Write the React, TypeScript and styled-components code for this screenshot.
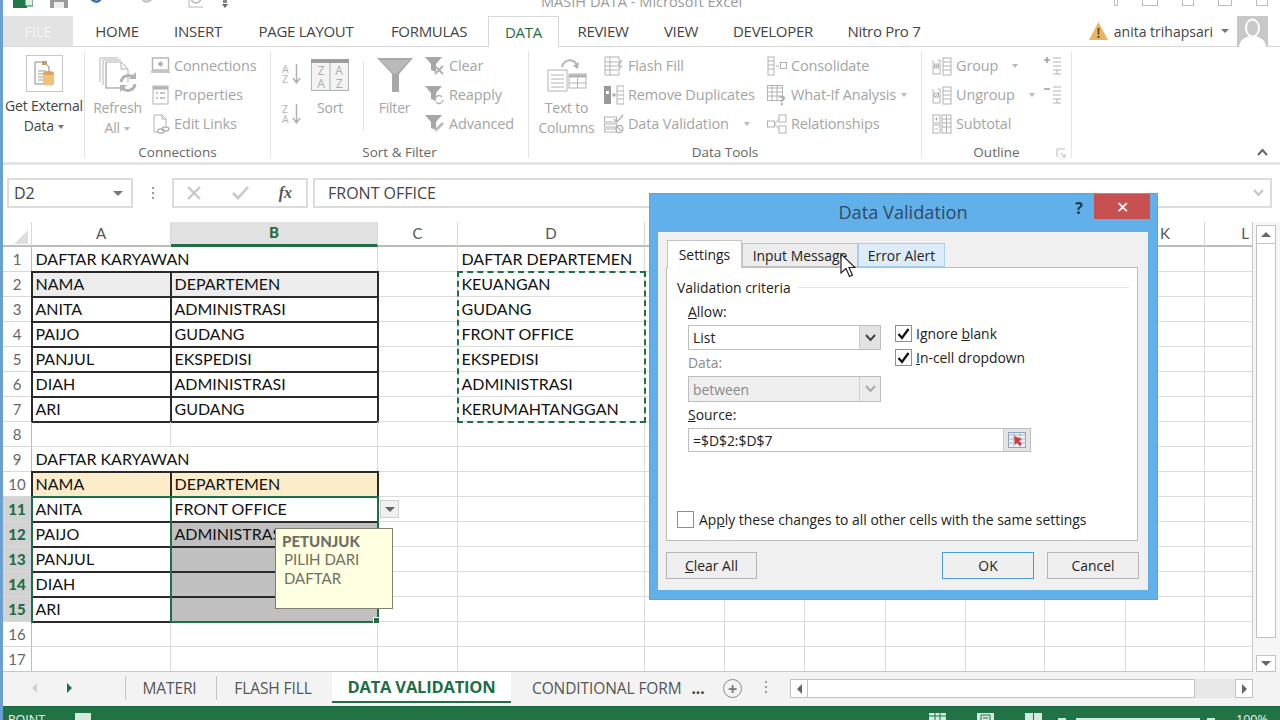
import React from 'react'
import styled, { createGlobalStyle } from 'styled-components'

const UI_FONT = '"Open Sans", "Liberation Sans", sans-serif'
const SHEET_FONT = 'Lato, "Liberation Sans", sans-serif'
const GREEN = '#1f6e46'
const ICON = '#b2b2b2'

const GlobalStyle = createGlobalStyle`
  html, body { margin: 0; padding: 0; background: #fff; }
  #root { width: 1280px; height: 720px; overflow: hidden; }
  * { box-sizing: border-box; }
`

/* ---------- icons ---------- */

const ExternalDataIcon = () => (
  <svg width="22" height="26" viewBox="0 0 22 26">
    <path d="M2 1h9l5 5v17H2z" fill="#fff" stroke="#8a8a8a" />
    <path d="M5 10h8M5 13h8M5 16h6M5 19h6" stroke="#9a9a9a" />
    <rect x="9" y="0" width="5" height="4" fill="#b9a26a" />
    <path d="M10 12h11v11c0 2-11 2-11 0z" fill="#eec27a" />
    <ellipse cx="15.5" cy="12" rx="5.5" ry="2" fill="#d9a659" />
  </svg>
)
const RefreshIcon = () => (
  <svg width="38" height="38" viewBox="0 0 38 38" fill="none" stroke={ICON}>
    <path d="M1 2h18M1 2v24M4 4h18M4 4v25M7 6h15l7 7v13" />
    <path d="M7 6v26h14" strokeWidth="1.5" />
    <path d="M22 6v7h7" />
    <path d="M22 26a7.5 7.5 0 0 1 13-4" strokeWidth="3" />
    <path d="M36 28a7.5 7.5 0 0 1-13 4" strokeWidth="3" />
    <path d="M37 16v7h-7zM21 36v-7h7z" fill={ICON} stroke="none" />
  </svg>
)
const ConnectionsIcon = () => (
  <svg width="19" height="17" viewBox="0 0 19 17" fill="none" stroke={ICON}>
    <rect x="1.5" y="1" width="16" height="12" strokeWidth="1.4" />
    <path d="M0 15h19" strokeWidth="1.5" />
    <path d="M9.5 4l3 3-3 3-3-3z" fill={ICON} stroke="none" />
  </svg>
)
const PropertiesIcon = () => (
  <svg width="17" height="20" viewBox="0 0 17 20" fill="none" stroke={ICON}>
    <rect x="1" y="1" width="15" height="18" />
    <path d="M1 3h15" strokeWidth="3" />
    <path d="M4 8h2M4 13h2M8 8h5M8 13h5" strokeWidth="1.5" />
  </svg>
)
const EditLinksIcon = () => (
  <svg width="19" height="20" viewBox="0 0 19 20" fill="none" stroke={ICON}>
    <path d="M3 16V1h8l4 4v7M11 1v4h4" />
    <path d="M3 16v2h4" />
    <ellipse cx="10" cy="17" rx="3.5" ry="2" strokeWidth="1.3" />
    <ellipse cx="14.5" cy="15" rx="3.5" ry="2" strokeWidth="1.3" />
  </svg>
)
const SortSmallIcon = ({ top, bottom }: { top: string; bottom: string }) => (
  <svg width="20" height="22" viewBox="0 0 20 22">
    <text x="0" y="9.5" fontSize="10.5" fontFamily={UI_FONT} fill={ICON}>{top}</text>
    <text x="0" y="20" fontSize="10.5" fontFamily={UI_FONT} fill={ICON}>{bottom}</text>
    <path d="M14.5 1v18M11 15l3.5 5 3.5-5" fill="none" stroke={ICON} strokeWidth="1.5" />
  </svg>
)
const SortBigIcon = () => (
  <svg width="38" height="32" viewBox="0 0 38 32">
    <rect x="0.5" y="0.5" width="37" height="31" fill="#f3f3f3" stroke={ICON} />
    <rect x="0" y="0" width="38" height="4" fill="#9d9d9d" />
    <path d="M19 4v27" stroke={ICON} />
    <g fontSize="12" fontFamily={UI_FONT} fill="#adadad" textAnchor="middle">
      <text x="10" y="16">Z</text>
      <text x="28" y="16">A</text>
      <text x="10" y="29">A</text>
      <text x="28" y="29">Z</text>
    </g>
  </svg>
)
const FilterIcon = () => (
  <svg width="36" height="36" viewBox="0 0 36 36">
    <path d="M0 1h36L22 17v18h-7V17z" fill="#a8a8a8" />
    <path d="M3 3h30L19 17h-2z" fill="#bababa" />
  </svg>
)
const SmallFunnel = () => <path d="M0 1h17l-6 7v8l-5-2V8z" fill="#a6a6a6" />
const ClearIcon = () => (
  <svg width="20" height="20" viewBox="0 0 20 20">
    <SmallFunnel />
    <path d="M10 10l8 8M18 10l-8 8" stroke={ICON} strokeWidth="2" />
  </svg>
)
const ReapplyIcon = () => (
  <svg width="20" height="20" viewBox="0 0 20 20" fill="none">
    <SmallFunnel />
    <path d="M10 14a4 4 0 0 1 7-2M18 15a4 4 0 0 1-7 2" stroke={ICON} strokeWidth="1.4" />
  </svg>
)
const AdvancedIcon = () => (
  <svg width="20" height="20" viewBox="0 0 20 20">
    <SmallFunnel />
    <path d="M10 18l1-4 6-6 2 2-6 6z" fill="#bcbcbc" />
  </svg>
)
const TextColumnsIcon = () => (
  <svg width="40" height="36" viewBox="0 0 40 36" fill="none" stroke={ICON}>
    <path d="M15 10c2-8 11-9 15-2" strokeWidth="2" />
    <path d="M26 9l5 3 1-7z" fill={ICON} stroke="none" />
    <rect x="1" y="13" width="19" height="21" />
    <path d="M4 18h13M4 22h13M4 26h13M4 30h13" />
    <rect x="22" y="17" width="17" height="14" />
    <path d="M22 19h17" strokeWidth="3" />
    <path d="M30.5 21v10M22 26h17" />
  </svg>
)
const FlashFillIcon = () => (
  <svg width="20" height="20" viewBox="0 0 20 20" fill="none" stroke={ICON}>
    <rect x="1" y="1" width="14" height="18" />
    <path d="M1 6h14M1 10h14M1 14h14M6 1v18" />
    <path d="M15 4h4l-3 5h3l-6 9 2-7h-2z" fill="#bcbcbc" stroke="#fff" strokeWidth="0.5" />
  </svg>
)
const RemoveDupIcon = () => (
  <svg width="20" height="20" viewBox="0 0 20 20">
    <rect x="0" y="1" width="7" height="18" fill="#999" />
    <rect x="2" y="6" width="3" height="3" fill="#fff" />
    <rect x="13" y="1" width="7" height="18" fill="#fff" stroke={ICON} />
    <path d="M13 6h7M13 10h7M13 14h7" stroke={ICON} />
    <path d="M8 10h4M10 8v4" stroke="#999" />
  </svg>
)
const DataValidationIcon = () => (
  <svg width="20" height="20" viewBox="0 0 20 20" fill="none" stroke={ICON}>
    <rect x="0.5" y="3" width="12" height="5" />
    <path d="M10 5l3 3 6-7" strokeWidth="1.5" />
    <rect x="0.5" y="10" width="12" height="3" />
    <rect x="0.5" y="15" width="12" height="3" />
    <circle cx="15.5" cy="15" r="3.5" strokeWidth="1.3" />
    <path d="M13 13l5 4" strokeWidth="1.3" />
  </svg>
)
const ConsolidateIcon = () => (
  <svg width="20" height="20" viewBox="0 0 20 20" fill="none" stroke={ICON}>
    <rect x="1" y="1" width="6" height="18" />
    <path d="M1 5h6M1 9h6M1 13h6M9 10h3" />
    <rect x="13.5" y="6.5" width="6" height="6" />
  </svg>
)
const WhatIfIcon = () => (
  <svg width="20" height="20" viewBox="0 0 20 20" fill="none" stroke={ICON}>
    <rect x="0.5" y="0.5" width="15" height="15" />
    <path d="M0.5 3h15M5 0.5v15M10 0.5v15M0.5 7h15M0.5 11h15" />
    <text x="12" y="19.5" fontSize="13" fontWeight="700" fontFamily={UI_FONT} fill="#a8a8a8" stroke="none">?</text>
  </svg>
)
const RelationshipsIcon = () => (
  <svg width="20" height="20" viewBox="0 0 20 20" fill="none" stroke={ICON}>
    <rect x="0.5" y="7" width="7" height="6" />
    <rect x="12" y="1" width="7" height="7" />
    <rect x="12" y="12" width="7" height="7" />
    <path d="M7.5 10l4.500-5M7.500 10l4.500 5" />
  </svg>
)
const GroupIcon = ({ mark }: { mark: string }) => (
  <svg width="20" height="20" viewBox="0 0 20 20" fill="none" stroke={ICON}>
    <path d="M1 4v14h7V4h-2" />
    <rect x="2.500" y="8" width="4" height="4" />
    <path d={mark} />
    <rect x="11" y="2" width="8" height="17" />
    <path d="M11 6h8M11 10h8M11 14h8" />
  </svg>
)
const SubtotalIcon = () => (
  <svg width="20" height="20" viewBox="0 0 20 20" fill="none" stroke={ICON}>
    <rect x="1" y="1" width="7" height="8" />
    <rect x="1" y="11" width="7" height="8" />
    <path d="M3 5h3M4.500 3.500v3M3 15h3" />
    <rect x="10" y="1" width="9" height="18" />
    <path d="M10 5h9M10 9h9M10 13h9M14.500 1v18" />
  </svg>
)
const OutlineDetailIcon = ({ plus }: { plus?: boolean }) => (
  <svg width="18" height="20" viewBox="0 0 18 20" fill="none" stroke={ICON}>
    <path d={plus ? 'M0 4h6M3 1v6' : 'M0 4h6'} stroke="#a0a0a0" strokeWidth="1.6" />
    <path d="M9 2h8M9 6h8M9 10h8M9 14h8M9 18h8M13 14v4" />
  </svg>
)
const Chevron = ({ color = '#666', up }: { color?: string; up?: boolean }) => (
  <svg width="11" height="8" viewBox="0 0 11 8" fill="none">
    <path d={up ? 'M1 7l4.500-5 4.500 5' : 'M1 1l4.500 5 4.500-5'} stroke={color} strokeWidth="2" />
  </svg>
)
const LauncherIcon = () => (
  <svg width="10" height="10" viewBox="0 0 10 10" fill="none" stroke="#bbb">
    <path d="M1 9V1h8M5 5l4 4M9 6v3H6" />
  </svg>
)
const WarningIcon = () => (
  <svg width="19" height="18" viewBox="0 0 19 18">
    <path d="M9.500 0L19 18H0z" fill="#e9b65c" />
    <path d="M8.500 6h2l-.4 7h-1.200zM8.500 14h2v2h-2z" fill="#5a4520" />
  </svg>
)
const AvatarIcon = () => (
  <svg width="31" height="31" viewBox="0 0 31 31">
    <rect width="31" height="31" fill="#c8c8c8" />
    <ellipse cx="15.500" cy="12" rx="6.500" ry="8.500" fill="none" stroke="#fff" strokeWidth="2" />
    <path d="M2 31c1-9 7-9 10-11h7c3 2 9 2 10 11z" fill="#fff" />
  </svg>
)
const RefEditIcon = () => (
  <svg width="18" height="16" viewBox="0 0 18 16" fill="none">
    <rect x="0.500" y="0.500" width="17" height="15" fill="#eef3fa" stroke="#8ea3c0" />
    <path d="M0.500 3h17M0.500 7h17M0.500 11h17M6 0.500v15M12 0.500v15" stroke="#a8b8d0" />
    <path d="M6 4l8 3-3 2 3 3-2 2-3-3-2 2z" fill="#d43c3c" />
  </svg>
)
const MouseCursor = () => (
  <svg width="16" height="25" viewBox="0 0 16 25">
    <path d="M1 1v19l5-4.500 3.500 8 3-1.300-3.500-7.700h6z" fill="#fff" stroke="#222" strokeWidth="1.200" />
  </svg>
)
const XMark = () => (
  <svg width="16" height="14" viewBox="0 0 16 14" fill="none">
    <path d="M2 1l12 12M14 1L2 13" stroke="#c9c9c9" strokeWidth="2.400" />
  </svg>
)
const CheckMark = () => (
  <svg width="17" height="14" viewBox="0 0 17 14" fill="none">
    <path d="M1 7l5 5L16 1" stroke="#c9c9c9" strokeWidth="2.600" />
  </svg>
)
const TickBox = () => (
  <svg width="13" height="12" viewBox="0 0 13 12" fill="none">
    <path d="M1.500 6l3.500 4L11.500 1" stroke="#111" strokeWidth="2.300" />
  </svg>
)
const TitleBarIcons = () => (
  <>
    <svg width="20" height="16" viewBox="0 0 20 16"><rect width="14" height="16" fill="#1f7a48" /><rect x="12" y="2" width="8" height="12" fill="#dfeee6" stroke="#1f7a48" /></svg>
    <svg width="18" height="16" viewBox="0 0 18 16"><rect width="18" height="16" fill="#9a9a9a" /><rect x="4" y="10" width="10" height="6" fill="#eee" /></svg>
    <svg width="27" height="16" viewBox="0 0 27 16" fill="none"><path d="M2 6c6 6 10 4 12-2" stroke="#3f6ea8" strokeWidth="2.500" /><path d="M21 8l5-4" stroke="#ccc" /></svg>
    <svg width="25" height="16" viewBox="0 0 25 16" fill="none"><path d="M18 6c-6 6-10 4-12-2" stroke="#c4c4c4" strokeWidth="2.500" /></svg>
    <svg width="17" height="16" viewBox="0 0 17 16" fill="none"><circle cx="9" cy="6" r="5" stroke="#b5b5b5" strokeWidth="1.500" /><path d="M2 0v15h14" stroke="#b5b5b5" /></svg>
    <svg width="6" height="16" viewBox="0 0 6 16"><path d="M0 12h6l-3 4z" fill="#666" /><path d="M1 8h4v3H1z" fill="#888" /></svg>
  </>
)
const ViewGlyph = ({ d }: { d: string }) => (
  <svg width="17" height="10" viewBox="0 0 17 10" fill="none">
    <rect width="17" height="10" fill="#d3ebdf" />
    <path d={d} stroke="#217346" />
  </svg>
)

/* ---------- shell ---------- */

const Window = styled.div`
  position: relative;
  width: 1280px;
  height: 720px;
  display: flex;
  flex-direction: column;
  overflow: hidden;
  border-left: 3px solid #6aa0cf;
  background: #fff;
  font-family: ${UI_FONT};
`
const TitleBar = styled.div`
  height: 16px;
  flex: none;
  display: grid;
  grid-template-columns: 1fr auto 1fr;
  grid-template-rows: 16px;
  align-items: end;
  overflow: hidden;
`
const QuickAccess = styled.div`
  display: flex;
  align-items: flex-end;
  gap: 20px;
  padding: 0 0 8px 10px;
  height: 16px;
  & > svg:nth-child(2) { margin-left: -3px; }
  & > svg:nth-child(5) { margin-left: 7px; }
  & > svg:nth-child(6) { margin-left: -2px; }
`
const WindowTitle = styled.div`
  font-size: 14.600px;
  line-height: 16px;
  color: #9a9a9a;
  padding-bottom: 7px;
  white-space: nowrap;
`
const WindowControls = styled.div`
  display: flex;
  justify-content: flex-end;
  align-items: flex-end;
  gap: 24px;
  padding: 0 12px 10px 0;
  height: 16px;
`
const WindowControl = styled.span<{ $w: number }>`
  display: block;
  width: ${(p) => p.$w}px;
  height: 6px;
  border: 1px solid #bdbdbd;
  border-top: 0;
`
const TabRow = styled.div`
  height: 31px;
  flex: none;
  display: flex;
  align-items: stretch;
  border-bottom: 1px solid #d8d8d8;
`
const FileTab = styled.div`
  width: 70px;
  margin-right: 7px;
  background: #e3e3e3;
  color: #f4f4f4;
  font-size: 14.500px;
  display: flex;
  align-items: center;
  justify-content: center;
`
const RibbonTab = styled.div<{ $w: number; $active?: boolean }>`
  width: ${(p) => p.$w}px;
  height: ${(p) => (p.$active ? '31px' : '30px')};
  display: flex;
  align-items: center;
  justify-content: center;
  font-size: 15px;
  letter-spacing: -0.3px;
  color: ${(p) => (p.$active ? GREEN : '#444')};
  background: #fff;
  border: ${(p) => (p.$active ? '1px solid #d8d8d8' : '0')};
  border-bottom: 0;
  white-space: nowrap;
`
const Account = styled.div`
  margin-left: auto;
  padding-right: 12px;
  display: flex;
  align-items: center;
  gap: 6px;
  font-size: 14px;
  color: #444;
`
const AccountCaret = styled.span`
  width: 0;
  height: 0;
  margin: 0 2px 0 2px;
  border: 4px solid transparent;
  border-top-color: #777;
  border-bottom: 0;
`

/* ---------- ribbon ---------- */

const Ribbon = styled.div`
  height: 118px;
  flex: none;
  display: flex;
  padding-top: 4px;
  border-bottom: 3px solid #e4e4e4;
`
const Group = styled.section<{ $w: number }>`
  width: ${(p) => p.$w}px;
  flex: none;
  display: flex;
  flex-direction: column;
  border-right: 1px solid #e4e4e4;
  margin-bottom: 4px;
`
const GroupBody = styled.div<{ $pad?: number }>`
  height: 91px;
  flex: none;
  display: flex;
  padding-left: ${(p) => p.$pad || 0}px;
`
const GroupTitle = styled.div`
  position: relative;
  flex: none;
  font-size: 13.500px;
  line-height: 18px;
  margin-top: 1px;
  text-align: center;
  color: #666;
`
const Launcher = styled.span`
  position: absolute;
  right: 5px;
  top: 5px;
  line-height: 0;
`
const BigButton = styled.div<{ $w: number; $muted?: boolean }>`
  width: ${(p) => p.$w}px;
  flex: none;
  display: flex;
  flex-direction: column;
  align-items: center;
  font-size: 14px;
  letter-spacing: -0.200px;
  line-height: 20px;
  color: ${(p) => (p.$muted ? '#a4a4a4' : '#444')};
  white-space: nowrap;
`
const IconSlot = styled.div<{ $h?: number }>`
  height: ${(p) => p.$h || 47}px;
  display: flex;
  align-items: center;
  justify-content: center;
`
const ExternalBox = styled.div`
  width: 37px;
  height: 37px;
  border: 1px solid #c6c6c6;
  display: flex;
  align-items: center;
  justify-content: center;
`
const SmallColumn = styled.div<{ $w?: number }>`
  width: ${(p) => (p.$w ? `${p.$w}px` : 'auto')};
  flex: none;
  display: flex;
  flex-direction: column;
`
const SmallRow = styled.div`
  height: 29px;
  display: flex;
  align-items: center;
  gap: 4px;
  font-size: 14.500px;
  letter-spacing: -0.150px;
  color: #a4a4a4;
  white-space: nowrap;
`
const SmallIcon = styled.span`
  width: 20px;
  display: flex;
  justify-content: center;
`
const MiniCaret = styled.span<{ $gap: number }>`
  width: 0;
  height: 0;
  margin-left: ${(p) => p.$gap}px;
  border: 3px solid transparent;
  border-top: 4px solid #b8b8b8;
  border-bottom: 0;
`
const TextCaret = styled(MiniCaret)<{ $color?: string }>`
  display: inline-block;
  vertical-align: middle;
  border-top-color: ${(p) => p.$color || '#777'};
`
const SortColumn = styled.div`
  width: 20px;
  flex: none;
  display: flex;
  flex-direction: column;
  gap: 18px;
  padding-top: 12px;
`
const RibbonRule = styled.div`
  width: 1px;
  height: 70px;
  margin: 10px 0 0 5px;
  background: #e4e4e4;
`
const Collapse = styled.div`
  flex: 1;
  display: flex;
  align-items: flex-end;
  justify-content: flex-end;
  padding: 0 12px 6px 0;
`

/* ---------- formula bar ---------- */

const FormulaBar = styled.div`
  height: 57px;
  flex: none;
  display: flex;
  align-items: flex-start;
  padding: 13px 8px 0 4px;
  font-size: 16px;
  color: #444;
`
const FormulaBox = styled.div`
  height: 30px;
  display: flex;
  align-items: center;
  border: 2px solid #dcdcdc;
`
const NameBox = styled(FormulaBox)`
  width: 126px;
  padding: 0 8px 0 5px;
  justify-content: space-between;
`
const DownCaret = styled.span`
  width: 0;
  height: 0;
  border: 5px solid transparent;
  border-top: 5px solid #777;
  border-bottom: 0;
`
const GripDots = styled.div<{ $w: number }>`
  width: ${(p) => p.$w}px;
  flex: none;
  height: 30px;
  display: flex;
  flex-direction: column;
  align-items: center;
  justify-content: center;
  gap: 3px;
  & > i { width: 2px; height: 2px; background: #9a9a9a; display: block; }
`
const FunctionBox = styled(FormulaBox)`
  width: 136px;
  padding: 0 14px 0 12px;
  justify-content: space-between;
`
const Fx = styled.span`
  font-family: "Liberation Serif", serif;
  font-style: italic;
  font-weight: 700;
  color: #555;
  font-size: 16px;
`
const FormulaInput = styled(FormulaBox)`
  flex: 1;
  margin-left: 5px;
  padding: 0 6px 0 13px;
  justify-content: space-between;
`

/* ---------- sheet ---------- */

const SheetArea = styled.div`
  height: 450px;
  flex: none;
  display: flex;
`
const Viewport = styled.div`
  width: 1250px;
  flex: none;
  overflow: hidden;
  border-right: 1px solid #c6c6c6;
  border-bottom: 1px solid #c6c6c6;
`
const SheetGrid = styled.div`
  position: relative;
  display: grid;
  grid-template-columns: 29px 139px 207px 80px 187px 80px 80px 81px 80px 79px 81px 79px 81px;
  grid-template-rows: repeat(18, 25px);
  width: 1283px;
  background: #fff;
  font-family: ${SHEET_FONT};
  font-size: 16px;
  color: #111;
`
const HeaderCell = styled.div<{ $on?: boolean }>`
  display: flex;
  align-items: center;
  justify-content: center;
  padding-bottom: 2px;
  font-size: 15px;
  border-right: 1px solid #d8d8d8;
  border-bottom: ${(p) => (p.$on ? `3px solid ${GREEN}` : '2px solid #bcbcbc')};
  background: ${(p) => (p.$on ? '#e1e1e1' : '#fff')};
  color: ${(p) => (p.$on ? GREEN : '#555')};
  font-weight: ${(p) => (p.$on ? 900 : 400)};
`
const CornerCell = styled.div`
  position: relative;
  border-right: 1px solid #d8d8d8;
  border-bottom: 2px solid #bcbcbc;
  &::after {
    content: '';
    position: absolute;
    right: 3px;
    bottom: 1px;
    border-left: 14px solid transparent;
    border-bottom: 14px solid #dedede;
  }
`
const RowHeader = styled.div<{ $row: number; $on?: boolean }>`
  grid-column: 1;
  grid-row: ${(p) => p.$row + 1};
  display: flex;
  align-items: center;
  justify-content: center;
  font-size: 15px;
  border-right: 1px solid #bcbcbc;
  border-bottom: 1px solid #d8d8d8;
  background: ${(p) => (p.$on ? '#d2d2d2' : '#fff')};
  color: ${(p) => (p.$on ? GREEN : '#666')};
  font-weight: ${(p) => (p.$on ? 900 : 400)};
`
const Cell = styled.div<{ $row: number; $col: number; $fill?: string; $boxed?: boolean; $open?: boolean }>`
  grid-column: ${(p) => p.$col + 2};
  grid-row: ${(p) => p.$row + 1};
  display: flex;
  align-items: center;
  padding: 0 0 2px 3.500px;
  white-space: nowrap;
  background: ${(p) => p.$fill || 'transparent'};
  border-right: ${(p) => (p.$open ? '0' : '1px solid #dcdcdc')};
  border-bottom: 1px solid #dcdcdc;
  ${(p) => (p.$boxed ? 'outline: 2px solid #2a2a2a; outline-offset: -1px;' : '')}
`
const RangeFrame = styled.div<{ $col: number; $from: number; $to: number; $line: string }>`
  grid-column: ${(p) => p.$col};
  grid-row: ${(p) => p.$from} / ${(p) => p.$to};
  position: relative;
  z-index: 1;
  margin: -1px -1px -1px -1px;
  border: ${(p) => p.$line};
  pointer-events: none;
`
const LeftEdgeFrame = styled(RangeFrame)`
  border-right: 0;
  border-bottom: 0;
`
const FillHandle = styled.span`
  position: absolute;
  right: -3px;
  bottom: -3px;
  width: 7px;
  height: 7px;
  background: ${GREEN};
  border: 1px solid #fff;
`
const CellDropdown = styled.div`
  grid-column: 4;
  grid-row: 12;
  position: relative;
  z-index: 1;
  justify-self: start;
  width: 19px;
  height: 18px;
  margin: 3px 0 0 2px;
  background: #f0f0f0;
  border: 1px solid #cfcfcf;
  display: flex;
  align-items: center;
  justify-content: center;
`
const InputTip = styled.div`
  position: absolute;
  z-index: 2;
  left: 272px;
  top: 306px;
  width: 118px;
  height: 81px;
  padding: 4px 6px;
  background: #ffffe1;
  border: 1px solid #7f7f70;
  color: #6f6f64;
  font-size: 15px;
  line-height: 19px;
`
const TipTitle = styled.div`
  font-weight: 900;
  line-height: 17px;
`
const TipLine = styled.div`
  padding-left: 2px;
`
const VScroll = styled.div`
  width: 27px;
  flex: none;
  display: flex;
  flex-direction: column;
  align-items: flex-start;
  padding: 3px 0 0 3px;
  background: #f6f6f6;
`
const ScrollButton = styled.div<{ $w?: number; $h?: number }>`
  width: ${(p) => p.$w || 20}px;
  height: ${(p) => p.$h || 19}px;
  flex: none;
  display: flex;
  align-items: center;
  justify-content: center;
  background: #fff;
  border: 1px solid #c2c2c2;
`
const VThumb = styled.div`
  width: 20px;
  height: 394px;
  background: #fff;
  border: 1px solid #c2c2c2;
  border-top: 0;
`
const VTrack = styled.div`
  flex: 1;
`
const Triangle = styled.span<{ $dir: 'up' | 'down' | 'left' | 'right'; $color?: string }>`
  width: 0;
  height: 0;
  border: 5px solid transparent;
  ${(p) => `border-${{ up: 'bottom', down: 'top', left: 'right', right: 'left' }[p.$dir]}-color: ${p.$color || '#666'};`}
  ${(p) => `border-${p.$dir === 'up' ? 'top' : p.$dir === 'down' ? 'bottom' : p.$dir === 'left' ? 'left' : 'right'}: 0;`}
`

/* ---------- sheet tabs and status ---------- */

const SheetBar = styled.div`
  height: 34px;
  flex: none;
  display: flex;
  align-items: stretch;
  background: #f3f3f3;
  font-size: 15.500px;
  letter-spacing: -0.100px;
  color: #555;
`
const SheetNav = styled.div`
  width: 122px;
  flex: none;
  display: flex;
  align-items: center;
  gap: 30px;
  padding: 0 0 2px 29px;
`
const SheetTab = styled.div<{ $w: number; $clip?: boolean }>`
  width: ${(p) => p.$w}px;
  flex: none;
  margin: 4px 0 6px;
  display: flex;
  align-items: center;
  justify-content: ${(p) => (p.$clip ? 'flex-start' : 'center')};
  padding-right: ${(p) => (p.$clip ? 0 : 3)}px;
  border-left: 1px solid #c6c6c6;
  overflow: hidden;
  white-space: nowrap;
`
const ClippedTab = styled(SheetTab)`
  margin-left: 21px;
  border-left: 0;
`
const ActiveSheetTab = styled.div`
  width: 179px;
  flex: none;
  height: 31px;
  display: flex;
  align-items: center;
  justify-content: center;
  background: #fff;
  border-bottom: 2px solid ${GREEN};
  color: ${GREEN};
  font-weight: 700;
  font-size: 16.500px;
  letter-spacing: -0.200px;
  white-space: nowrap;
`
const More = styled.div`
  width: 34px;
  flex: none;
  display: flex;
  align-items: center;
  justify-content: center;
  padding-bottom: 2px;
  font-weight: 700;
  color: #444;
`
const AddSheet = styled.div`
  width: 19px;
  height: 19px;
  margin: 7px 0 0 8px;
  flex: none;
  border: 1.500px solid #8d8d8d;
  border-radius: 50%;
  display: flex;
  align-items: center;
  justify-content: center;
  font-size: 16px;
  font-weight: 700;
  line-height: 1;
  color: #777;
`
const HScroll = styled.div`
  width: 463px;
  height: 19px;
  flex: none;
  margin: 7px 0 0 0;
  display: flex;
  background: #e8e8e8;
`
const HThumb = styled.div`
  width: 387px;
  background: #fff;
  border: 1px solid #c2c2c2;
  border-left: 0;
`
const HTrack = styled.div`
  flex: 1;
`
const StatusBar = styled.div`
  height: 14px;
  flex: none;
  display: flex;
  align-items: flex-start;
  overflow: hidden;
  background: #217346;
  border-top: 1px solid #1a6a3f;
  padding-top: 6px;
  color: #eaf3ee;
  font-size: 12.500px;
  line-height: 14px;
`
const StatusText = styled.span`
  padding-left: 5px;
  width: 72px;
`
const StatusViews = styled.div`
  margin-left: auto;
  display: flex;
  align-items: flex-start;
  gap: 31px;
  margin-right: 21px;
`
const ZoomMark = styled.span`
  width: 8px;
  height: 2px;
  margin: 5px -21px 0 -15px;
  background: #d3ebdf;
`
const ZoomPlus = styled(ZoomMark)`
  margin: 5px 0 0 -24px;
`
const ZoomTrack = styled.span`
  width: 124px;
  height: 2px;
  margin-top: 5px;
  background: #d3ebdf;
`
const ZoomLabel = styled.span`
  width: 44px;
`
const MacroMark = styled.span`
  width: 16px;
  height: 10px;
  background: #d3ebdf;
`

/* ---------- dialog ---------- */

const Dialog = styled.div`
  position: absolute;
  z-index: 5;
  left: 646px;
  top: 193px;
  width: 509px;
  height: 407px;
  display: flex;
  flex-direction: column;
  padding: 0 9px 9px 8px;
  background: #62b0e9;
  border: 1px solid #5aa5dc;
`
const DialogTitleBar = styled.div`
  height: 38px;
  flex: none;
  display: grid;
  grid-template-columns: 1fr auto 1fr;
  color: #2e4a62;
`
const DialogTitle = styled.div`
  font-size: 18.200px;
  line-height: 36px;
  white-space: nowrap;
`
const DialogControls = styled.div`
  display: flex;
  justify-content: flex-end;
  margin-right: -2px;
`
const HelpMark = styled.span`
  margin-right: 11px;
  font-size: 16px;
  font-weight: 700;
  line-height: 28px;
  color: #27384a;
`
const CloseButton = styled.div`
  width: 56px;
  height: 25px;
  background: #c75050;
  display: flex;
  align-items: center;
  justify-content: center;
  color: #fff;
`
const DialogBody = styled.div`
  flex: 1;
  display: flex;
  flex-direction: column;
  padding: 8px 9px 9px 8px;
  background: #f0f0f0;
  font-size: 13.900px;
  color: #222;
`
const DialogTabs = styled.div`
  display: flex;
  align-items: flex-end;
  height: 27px;
  padding-left: 1px;
`
const DialogTab = styled.div<{ $w: number; $state?: 'active' | 'hover' }>`
  width: ${(p) => p.$w}px;
  height: ${(p) => (p.$state === 'active' ? '28px' : '24px')};
  margin-bottom: ${(p) => (p.$state === 'active' ? '-1px' : '0')};
  position: relative;
  z-index: ${(p) => (p.$state === 'active' ? 1 : 0)};
  display: flex;
  align-items: center;
  justify-content: center;
  border: 1px solid ${(p) => (p.$state === 'hover' ? '#a9cfee' : '#c4c4c4')};
  border-bottom: ${(p) => (p.$state === 'active' ? '0' : undefined)};
  background: ${(p) => (p.$state === 'active' ? '#fff' : p.$state === 'hover' ? '#dcecfa' : '#ececec')};
`
const TabPanel = styled.div`
  height: 274px;
  flex: none;
  display: flex;
  flex-direction: column;
  margin-right: 1px;
  padding: 10px 8px 12px 10px;
  background: #fff;
  border: 1px solid #bdbdbd;
`
const FieldsetLegend = styled.div`
  display: flex;
  align-items: center;
  gap: 7px;
  height: 18px;
  white-space: nowrap;
  &::after { content: ''; flex: 1; height: 1px; background: #e6e6e6; }
`
const FormColumns = styled.div`
  display: flex;
  margin: 7px 0 0 11px;
`
const FieldColumn = styled.div`
  width: 193px;
  flex: none;
`
const FieldLabel = styled.div<{ $muted?: boolean }>`
  height: 18px;
  line-height: 18px;
  margin-bottom: 4px;
  color: ${(p) => (p.$muted ? '#8a8a8a' : '#222')};
`
const ComboBox = styled.div<{ $off?: boolean; $h: number }>`
  height: ${(p) => p.$h}px;
  display: flex;
  align-items: center;
  justify-content: space-between;
  margin-bottom: 4px;
  padding-left: 4px;
  border: 1px solid #bdbdbd;
  background: ${(p) => (p.$off ? '#efefef' : '#fff')};
  color: ${(p) => (p.$off ? '#8a8a8a' : '#222')};
`
const ComboArrow = styled.div<{ $off?: boolean }>`
  width: 21px;
  height: 100%;
  display: flex;
  align-items: center;
  justify-content: center;
  background: ${(p) => (p.$off ? '#ececec' : '#e2e2e2')};
  border-left: 1px solid #cfcfcf;
`
const CheckColumn = styled.div`
  margin-left: 14px;
  padding-top: 22px;
  display: flex;
  flex-direction: column;
  gap: 7px;
`
const CheckRow = styled.label`
  display: flex;
  align-items: center;
  gap: 4px;
  height: 17px;
  white-space: nowrap;
`
const CheckBox = styled.span`
  width: 17px;
  height: 17px;
  flex: none;
  display: flex;
  align-items: center;
  justify-content: center;
  border: 1px solid #8f8f8f;
  background: #fff;
`
const SourceField = styled.div`
  margin-left: 11px;
  width: 343px;
`
const SourceInput = styled.div`
  height: 24px;
  display: flex;
  align-items: center;
  justify-content: space-between;
  padding-left: 4px;
  border: 1px solid #bdbdbd;
`
const RefButton = styled.div`
  width: 27px;
  height: 100%;
  display: flex;
  align-items: center;
  justify-content: center;
  background: #e4e4e4;
  border-left: 1px solid #cfcfcf;
`
const ApplyRow = styled(CheckRow)`
  margin-top: auto;
  gap: 5px;
`
const DialogFooter = styled.div`
  display: flex;
  margin-top: 11px;
  gap: 13px;
`
const DialogButton = styled.div<{ $primary?: boolean; $w?: number }>`
  width: ${(p) => p.$w || 92}px;
  height: 27px;
  display: flex;
  align-items: center;
  justify-content: center;
  background: #efefef;
  border: 1px solid ${(p) => (p.$primary ? '#4b9ad8' : '#b5b5b5')};
`
const FooterGap = styled.div`
  flex: 1;
`
const CursorMark = styled.div`
  position: absolute;
  z-index: 6;
  left: 837px;
  top: 253px;
  line-height: 0;
`

/* ---------- data ---------- */

const tabs: [string, number, boolean?][] = [
  ['HOME', 74],
  ['INSERT', 88],
  ['PAGE LAYOUT', 128],
  ['FORMULAS', 118],
  ['DATA', 71, true],
  ['REVIEW', 88],
  ['VIEW', 68],
  ['DEVELOPER', 116],
  ['Nitro Pro 7', 106],
]

const columns = ['A', 'B', 'C', 'D', 'E', 'F', 'G', 'H', 'I', 'J', 'K', 'L']

const values: Record<number, Record<string, string>> = {
  1: { A: 'DAFTAR KARYAWAN', D: 'DAFTAR DEPARTEMEN' },
  2: { A: 'NAMA', B: 'DEPARTEMEN', D: 'KEUANGAN' },
  3: { A: 'ANITA', B: 'ADMINISTRASI', D: 'GUDANG' },
  4: { A: 'PAIJO', B: 'GUDANG', D: 'FRONT OFFICE' },
  5: { A: 'PANJUL', B: 'EKSPEDISI', D: 'EKSPEDISI' },
  6: { A: 'DIAH', B: 'ADMINISTRASI', D: 'ADMINISTRASI' },
  7: { A: 'ARI', B: 'GUDANG', D: 'KERUMAHTANGGAN' },
  9: { A: 'DAFTAR KARYAWAN' },
  10: { A: 'NAMA', B: 'DEPARTEMEN' },
  11: { A: 'ANITA', B: 'FRONT OFFICE' },
  12: { A: 'PAIJO', B: 'ADMINISTRASI' },
  13: { A: 'PANJUL' },
  14: { A: 'DIAH' },
  15: { A: 'ARI' },
}

const rowNumbers = Array.from({ length: 17 }, (_, i) => i + 1)

const isBoxed = (row: number, col: string) =>
  (col === 'A' || col === 'B') && ((row >= 2 && row <= 7) || (row >= 10 && row <= 15))

const fillFor = (row: number, col: string) => {
  if (col !== 'A' && col !== 'B') return undefined
  if (row === 2) return '#ededed'
  if (row === 10) return '#fcecc9'
  if (col === 'B' && row >= 12 && row <= 15) return '#c0c0c0'
  return undefined
}

const Sheet = () => (
  <SheetGrid>
    <CornerCell />
    {columns.map((c) => (
      <HeaderCell key={c} $on={c === 'B'}>{c}</HeaderCell>
    ))}
    {rowNumbers.map((row) => (
      <React.Fragment key={row}>
        <RowHeader $row={row} $on={row >= 11 && row <= 15}>{row}</RowHeader>
        {columns.map((c, i) => (
          <Cell
            key={c}
            $row={row}
            $col={i}
            $fill={fillFor(row, c)}
            $boxed={isBoxed(row, c)}
            $open={c === 'A' && (row === 1 || row === 9)}
          >
            {values[row]?.[c]}
          </Cell>
        ))}
      </React.Fragment>
    ))}
    <RangeFrame $col={5} $from={3} $to={9} $line={`2px dashed ${GREEN}`} />
    <LeftEdgeFrame $col={2} $from={12} $to={17} $line={`2px solid ${GREEN}`} />
    <RangeFrame $col={3} $from={12} $to={17} $line={`2px solid ${GREEN}`}>
      <FillHandle />
    </RangeFrame>
    <CellDropdown>
      <Triangle $dir="down" $color="#666" />
    </CellDropdown>
    <InputTip>
      <TipTitle>PETUNJUK</TipTitle>
      <TipLine>PILIH DARI</TipLine>
      <TipLine>DAFTAR</TipLine>
    </InputTip>
  </SheetGrid>
)

const RibbonGroups = () => (
  <Ribbon>
    <Group $w={82}>
      <GroupBody>
        <BigButton $w={82}>
          <IconSlot $h={45}>
            <ExternalBox><ExternalDataIcon /></ExternalBox>
          </IconSlot>
          <span>Get External</span>
          <span>Data <TextCaret $gap={1} /></span>
        </BigButton>
      </GroupBody>
    </Group>
    <Group $w={186}>
      <GroupBody>
        <BigButton $w={65} $muted>
          <IconSlot><RefreshIcon /></IconSlot>
          <span>Refresh</span>
          <span>All <TextCaret $gap={1} $color="#b8b8b8" /></span>
        </BigButton>
        <SmallColumn>
          <SmallRow><SmallIcon><ConnectionsIcon /></SmallIcon>Connections</SmallRow>
          <SmallRow><SmallIcon><PropertiesIcon /></SmallIcon>Properties</SmallRow>
          <SmallRow><SmallIcon><EditLinksIcon /></SmallIcon>Edit Links</SmallRow>
        </SmallColumn>
      </GroupBody>
      <GroupTitle>Connections</GroupTitle>
    </Group>
    <Group $w={258}>
      <GroupBody $pad={11}>
        <SortColumn>
          <SortSmallIcon top="A" bottom="Z" />
          <SortSmallIcon top="Z" bottom="A" />
        </SortColumn>
        <BigButton $w={56} $muted>
          <IconSlot><SortBigIcon /></IconSlot>
          <span>Sort</span>
        </BigButton>
        <RibbonRule />
        <BigButton $w={61} $muted>
          <IconSlot><FilterIcon /></IconSlot>
          <span>Filter</span>
        </BigButton>
        <SmallColumn>
          <SmallRow><SmallIcon><ClearIcon /></SmallIcon>Clear</SmallRow>
          <SmallRow><SmallIcon><ReapplyIcon /></SmallIcon>Reapply</SmallRow>
          <SmallRow><SmallIcon><AdvancedIcon /></SmallIcon>Advanced</SmallRow>
        </SmallColumn>
      </GroupBody>
      <GroupTitle>Sort &amp; Filter</GroupTitle>
    </Group>
    <Group $w={393}>
      <GroupBody>
        <BigButton $w={75} $muted>
          <IconSlot><TextColumnsIcon /></IconSlot>
          <span>Text to</span>
          <span>Columns</span>
        </BigButton>
        <SmallColumn $w={163}>
          <SmallRow><SmallIcon><FlashFillIcon /></SmallIcon>Flash Fill</SmallRow>
          <SmallRow><SmallIcon><RemoveDupIcon /></SmallIcon>Remove Duplicates</SmallRow>
          <SmallRow><SmallIcon><DataValidationIcon /></SmallIcon>Data Validation<MiniCaret $gap={11} /></SmallRow>
        </SmallColumn>
        <SmallColumn>
          <SmallRow><SmallIcon><ConsolidateIcon /></SmallIcon>Consolidate</SmallRow>
          <SmallRow><SmallIcon><WhatIfIcon /></SmallIcon>What-If Analysis<MiniCaret $gap={1} /></SmallRow>
          <SmallRow><SmallIcon><RelationshipsIcon /></SmallIcon>Relationships</SmallRow>
        </SmallColumn>
      </GroupBody>
      <GroupTitle>Data Tools</GroupTitle>
    </Group>
    <Group $w={150}>
      <GroupBody $pad={10}>
        <SmallColumn $w={112}>
          <SmallRow><SmallIcon><GroupIcon mark="M3 10h3M4.500 8.500v3" /></SmallIcon>Group<MiniCaret $gap={10} /></SmallRow>
          <SmallRow><SmallIcon><GroupIcon mark="M3 12l3-3" /></SmallIcon>Ungroup<MiniCaret $gap={10} /></SmallRow>
          <SmallRow><SmallIcon><SubtotalIcon /></SmallIcon>Subtotal</SmallRow>
        </SmallColumn>
        <SmallColumn>
          <SmallRow><OutlineDetailIcon plus /></SmallRow>
          <SmallRow><OutlineDetailIcon /></SmallRow>
        </SmallColumn>
      </GroupBody>
      <GroupTitle>
        Outline
        <Launcher><LauncherIcon /></Launcher>
      </GroupTitle>
    </Group>
    <Collapse><Chevron up /></Collapse>
  </Ribbon>
)

const ValidationDialog = () => (
  <Dialog>
    <DialogTitleBar>
      <span />
      <DialogTitle>Data Validation</DialogTitle>
      <DialogControls>
        <HelpMark>?</HelpMark>
        <CloseButton>✕</CloseButton>
      </DialogControls>
    </DialogTitleBar>
    <DialogBody>
      <DialogTabs>
        <DialogTab $w={75} $state="active">Settings</DialogTab>
        <DialogTab $w={116}>Input Message</DialogTab>
        <DialogTab $w={87} $state="hover">Error Alert</DialogTab>
      </DialogTabs>
      <TabPanel>
        <FieldsetLegend>Validation criteria</FieldsetLegend>
        <FormColumns>
          <FieldColumn>
            <FieldLabel><u>A</u>llow:</FieldLabel>
            <ComboBox $h={25}>
              List
              <ComboArrow><Chevron color="#444" /></ComboArrow>
            </ComboBox>
            <FieldLabel $muted>Data:</FieldLabel>
            <ComboBox $h={26} $off>
              between
              <ComboArrow $off><Chevron color="#aaa" /></ComboArrow>
            </ComboBox>
          </FieldColumn>
          <CheckColumn>
            <CheckRow><CheckBox><TickBox /></CheckBox><span>Ignore <u>b</u>lank</span></CheckRow>
            <CheckRow><CheckBox><TickBox /></CheckBox><span><u>I</u>n-cell dropdown</span></CheckRow>
          </CheckColumn>
        </FormColumns>
        <SourceField>
          <FieldLabel><u>S</u>ource:</FieldLabel>
          <SourceInput>
            =$D$2:$D$7
            <RefButton><RefEditIcon /></RefButton>
          </SourceInput>
        </SourceField>
        <ApplyRow>
          <CheckBox />
          <span>Ap<u>p</u>ly these changes to all other cells with the same settings</span>
        </ApplyRow>
      </TabPanel>
      <DialogFooter>
        <DialogButton $w={91}><span><u>C</u>lear All</span></DialogButton>
        <FooterGap />
        <DialogButton $primary>OK</DialogButton>
        <DialogButton>Cancel</DialogButton>
      </DialogFooter>
    </DialogBody>
  </Dialog>
)

const App = () => (
  <>
    <GlobalStyle />
    <Window>
      <TitleBar>
        <QuickAccess><TitleBarIcons /></QuickAccess>
        <WindowTitle>MASIH DATA - Microsoft Excel</WindowTitle>
        <WindowControls>
          <WindowControl $w={4} />
          <WindowControl $w={16} />
          <WindowControl $w={12} />
          <WindowControl $w={14} />
          <WindowControl $w={12} />
        </WindowControls>
      </TitleBar>
      <TabRow>
        <FileTab>FILE</FileTab>
        {tabs.map(([label, w, active]) => (
          <RibbonTab key={label} $w={w} $active={active}>{label}</RibbonTab>
        ))}
        <Account>
          <WarningIcon />
          anita trihapsari
          <AccountCaret />
          <AvatarIcon />
        </Account>
      </TabRow>
      <RibbonGroups />
      <FormulaBar>
        <NameBox>D2<DownCaret /></NameBox>
        <GripDots $w={39}><i /><i /><i /></GripDots>
        <FunctionBox><XMark /><CheckMark /><Fx>fx</Fx></FunctionBox>
        <FormulaInput>FRONT OFFICE<Chevron color="#c4c4c4" /></FormulaInput>
      </FormulaBar>
      <SheetArea>
        <Viewport><Sheet /></Viewport>
        <VScroll>
          <ScrollButton><Triangle $dir="up" /></ScrollButton>
          <VThumb />
          <VTrack />
          <ScrollButton $h={17}><Triangle $dir="down" /></ScrollButton>
        </VScroll>
      </SheetArea>
      <SheetBar>
        <SheetNav>
          <Triangle $dir="left" $color="#cfcfcf" />
          <Triangle $dir="right" $color={GREEN} />
        </SheetNav>
        <SheetTab $w={91}>MATERI</SheetTab>
        <SheetTab $w={116}>FLASH FILL</SheetTab>
        <ActiveSheetTab>DATA VALIDATION</ActiveSheetTab>
        <ClippedTab $w={149} $clip>CONDITIONAL FORMATTING</ClippedTab>
        <More>...</More>
        <AddSheet>+</AddSheet>
        <GripDots $w={48}><i /><i /><i /></GripDots>
        <HScroll>
          <ScrollButton $w={18}><Triangle $dir="left" /></ScrollButton>
          <HThumb />
          <HTrack />
          <ScrollButton $w={18}><Triangle $dir="right" /></ScrollButton>
        </HScroll>
      </SheetBar>
      <StatusBar>
        <StatusText>POINT</StatusText>
        <MacroMark />
        <StatusViews>
          <ViewGlyph d="M0 3h17M6 0v10M11 0v10" />
          <ViewGlyph d="M4 2h9v8M4 2v8M6 5h5" />
          <ViewGlyph d="M8.500 0v10" />
          <ZoomMark />
          <ZoomTrack />
          <ZoomPlus />
        </StatusViews>
        <ZoomLabel>100%</ZoomLabel>
      </StatusBar>
      <ValidationDialog />
      <CursorMark><MouseCursor /></CursorMark>
    </Window>
  </>
)

export default App
